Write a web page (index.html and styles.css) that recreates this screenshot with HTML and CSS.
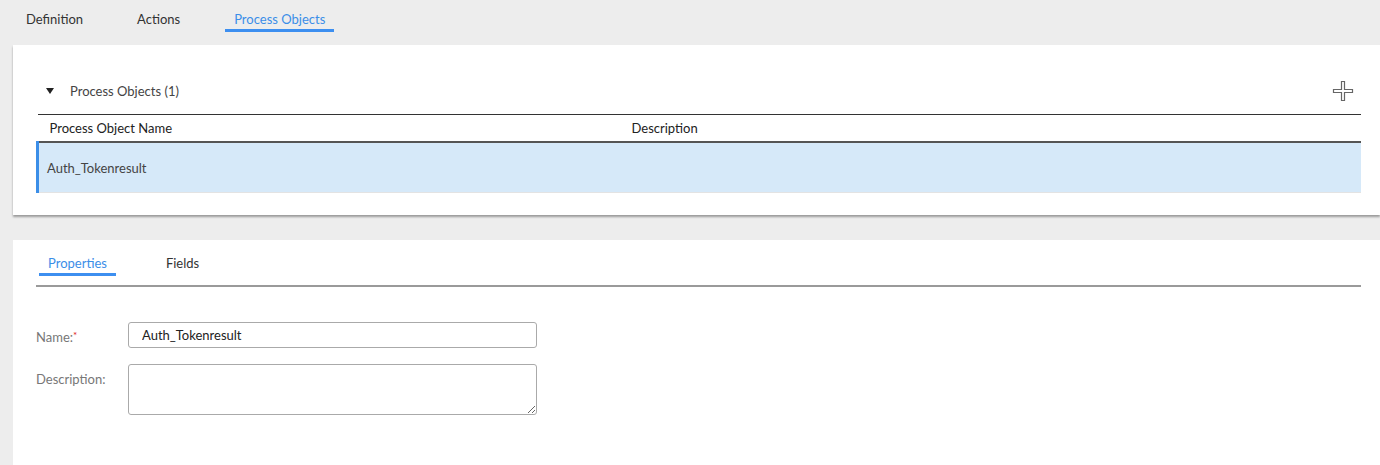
FILE: index.html
```html
<!DOCTYPE html>
<html lang="en">
<head>
  <meta charset="UTF-8" />
  <title>Process Objects</title>
  <link rel="stylesheet" href="styles.css">
</head>
<body>
  <div class="top-tabs">
    <div class="tab">Definition</div>
    <div class="tab">Actions</div>
    <div class="tab active">Process Objects</div>
  </div>

  <div class="panel list-panel">
    <div class="section-head">
      <span class="caret"></span>
      <span class="section-title">Process Objects (1)</span>
      <svg class="add-icon" width="22" height="22" viewBox="0 0 22 22">
        <path d="M9.5 1.5h3v8h8v3h-8v8h-3v-8h-8v-3h8z" fill="#fff" stroke="#666" stroke-width="1.2"/>
      </svg>
    </div>
    <table class="grid">
      <thead>
        <tr>
          <th class="col-name">Process Object Name</th>
          <th>Description</th>
        </tr>
      </thead>
      <tbody>
        <tr class="selected">
          <td class="col-name">Auth_Tokenresult</td>
          <td></td>
        </tr>
      </tbody>
    </table>
  </div>

  <div class="panel detail-panel">
    <div class="sub-tabs">
      <div class="tab active">Properties</div>
      <div class="tab">Fields</div>
    </div>
    <div class="form">
      <div class="form-row">
        <label for="po-name">Name:<span class="req">*</span></label>
        <input id="po-name" type="text" value="Auth_Tokenresult">
      </div>
      <div class="form-row">
        <label for="po-desc">Description:</label>
        <textarea id="po-desc"></textarea>
      </div>
    </div>
  </div>
</body>
</html>
```

FILE: styles.css
```css
body {
  margin: 0;
  background-color: #ededed;
  font-family: Lato, "Noto Sans", sans-serif;
  font-size: 13px;
  color: #333;
}
.tab {
  padding: 0 9px;
  line-height: 19px;
  border-bottom: 3px solid transparent;
  cursor: pointer;
}
.tab.active {
  color: #3b8ee8;
  border-bottom-color: #3d8ff0;
}
.top-tabs {
  display: flex;
  gap: 36px;
  height: 45px;
  box-sizing: border-box;
  padding: 10px 0 0 17px;
  align-items: flex-start;
}
.panel {
  background: #fff;
  margin-left: 13px;
  padding: 0 19px 0 23px;
}
.list-panel {
  height: 170px;
  box-sizing: border-box;
  padding-top: 34px;
  box-shadow: 0 2px 2px rgba(0, 0, 0, 0.35);
}
.section-head {
  display: flex;
  align-items: center;
  height: 24px;
  margin-bottom: 11px;
}
.caret {
  width: 0;
  height: 0;
  border-left: 4px solid transparent;
  border-right: 4px solid transparent;
  border-top: 6px solid #222;
  margin: 0 16px 0 10px;
}
.section-title {
  flex: 1;
  color: #444;
}
.add-icon {
  margin-right: 7px;
}
.grid {
  width: 100%;
  border-collapse: collapse;
  border-top: 1px solid #333;
}
.grid th {
  text-align: left;
  font-weight: normal;
  color: #222;
  height: 26px;
  padding: 0;
  border-bottom: 2px solid #555;
}
.grid th.col-name {
  width: 582px;
  padding-left: 12px;
}
.grid td {
  height: 49px;
  padding: 0;
  border-bottom: 1px solid #e3e3e3;
}
.grid tr.selected td {
  background: #d6e9f9;
  color: #444;
}
.grid tr.selected td.col-name {
  border-left: 3px solid #3b8ee8;
  padding-left: 8px;
}
.detail-panel {
  margin-top: 25px;
  height: 225px;
  box-sizing: border-box;
  padding-top: 14px;
}
.sub-tabs {
  display: flex;
  gap: 41px;
  padding: 0 0 9px 3px;
  border-bottom: 2px solid #9a9a9a;
}
.form {
  padding-top: 35px;
  display: flex;
  flex-direction: column;
  gap: 16px;
}
.form-row {
  display: flex;
  align-items: flex-start;
}
.form-row label {
  width: 92px;
  padding-top: 6px;
  line-height: 18px;
  color: #777;
}
.req {
  color: #e02020;
  font-size: 10px;
  vertical-align: top;
  position: relative;
  top: -2px;
}
.form-row input,
.form-row textarea {
  width: 409px;
  box-sizing: border-box;
  border: 1px solid #aaa;
  border-radius: 3px;
  font-family: inherit;
  font-size: 13px;
  color: #222;
  margin: 0;
}
.form-row input {
  height: 26px;
  padding: 0 13px;
}
.form-row textarea {
  height: 51px;
  padding: 4px 13px;
}
```
